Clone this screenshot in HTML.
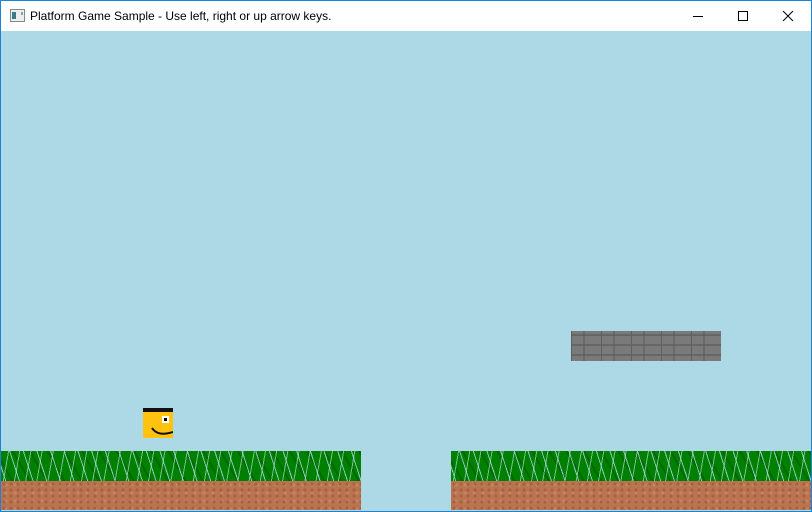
<!DOCTYPE html>
<html><head><meta charset="utf-8"><style>
html,body{margin:0;padding:0;width:812px;height:512px;overflow:hidden;background:#fff}
.win{position:absolute;left:0;top:0;width:810px;height:510px;border:1px solid #1883d7;background:#add8e6}
.title{position:absolute;left:0;top:0;width:810px;height:30px;background:#fff;font:12px "Liberation Sans",sans-serif;color:#000}
.title span{position:absolute;left:29px;top:8px}
.grass{position:absolute;height:30px;background:
repeating-linear-gradient(72deg,transparent 0 4px,rgba(173,216,230,.8) 4px 5px,transparent 5px 13px),
repeating-linear-gradient(100deg,transparent 0 7px,rgba(170,220,200,.7) 7px 8px,transparent 8px 11px),
repeating-linear-gradient(60deg,transparent 0 9px,rgba(0,90,0,.6) 9px 11px,transparent 11px 15px),#008000}
.dirt{position:absolute;height:29px;background:
radial-gradient(circle at 3px 3px,#a8603c 1px,transparent 2px) 0 0/7px 6px,
radial-gradient(circle at 2px 2px,#c88660 1px,transparent 2px) 3px 2px/9px 8px,#b97452}
.stone{position:absolute;left:570px;top:330px;width:150px;height:30px;background:
repeating-linear-gradient(90deg,#5f5f5f 0 1px,transparent 1px 30px),
repeating-linear-gradient(90deg,transparent 0 12px,rgba(90,90,90,.5) 12px 14px,transparent 14px 30px),
repeating-linear-gradient(0deg,transparent 0 5px,#666 5px 7px,transparent 7px 10px),#7a7a7a}
</style></head><body>
<div class="win">
<div class="title">
<svg style="position:absolute;left:9px;top:8px" width="15" height="13"><rect x="0.5" y="0.5" width="14" height="12" fill="#eee" stroke="#888"/><rect x="2" y="3" width="4" height="7" fill="#3a7a8a"/><rect x="11" y="3" width="2" height="3" fill="#7aa"/></svg>
<span>Platform Game Sample - Use left, right or up arrow keys.</span>
<svg style="position:absolute;left:690px;top:9px" width="110" height="12"><line x1="2" y1="6.5" x2="12" y2="6.5" stroke="#000"/><rect x="47.5" y="1.5" width="9" height="9" fill="none" stroke="#000"/><path d="M92 1L102 11M102 1L92 11" stroke="#000"/></svg>
</div>
<div class="stone"></div>
<div style="position:absolute;left:142px;top:407px;width:30px;height:30px;background:#ffc20e">
<div style="position:absolute;left:0;top:0;width:30px;height:4px;background:#111"></div>
<div style="position:absolute;left:19px;top:8px;width:7px;height:7px;background:#fff"></div>
<div style="position:absolute;left:21px;top:10px;width:3px;height:3px;background:#000"></div>
<svg style="position:absolute;left:0;top:0" width="30" height="30"><path d="M9 20Q15 29 30 24" fill="none" stroke="#111" stroke-width="2"/></svg>
</div>
<div class="grass" style="left:0;top:450px;width:360px"></div>
<div class="dirt" style="left:0;top:480px;width:360px"></div>
<div class="grass" style="left:450px;top:450px;width:360px"></div>
<div class="dirt" style="left:450px;top:480px;width:360px"></div>
</div>
</body></html>
